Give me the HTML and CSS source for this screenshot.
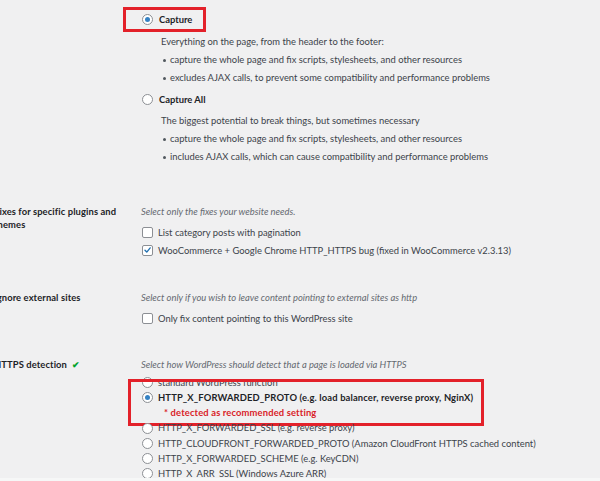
FILE: index.html
```html
<!DOCTYPE html>
<html lang="en">
<head>
<meta charset="utf-8">
<title>Settings</title>
<link rel="stylesheet" href="styles.css">
</head>
<body>
<div class="settings">
  <div class="row row-first">
    <div class="label"></div>
    <div class="field">
      <div class="opt highlighted">
        <span class="radio checked"></span><span class="opt-title">Capture</span>
        <span class="annot annot-1"></span>
      </div>
      <div class="explain">
        <p class="lead">Everything on the page, from the header to the footer:</p>
        <ul class="bullets">
          <li>capture the whole page and fix scripts, stylesheets, and other resources</li>
          <li>excludes AJAX calls, to prevent some compatibility and performance problems</li>
        </ul>
      </div>
      <div class="opt opt-second">
        <span class="radio"></span><span class="opt-title">Capture All</span>
      </div>
      <div class="explain">
        <p class="lead">The biggest potential to break things, but sometimes necessary</p>
        <ul class="bullets">
          <li>capture the whole page and fix scripts, stylesheets, and other resources</li>
          <li>includes AJAX calls, which can cause compatibility and performance problems</li>
        </ul>
      </div>
    </div>
  </div>

  <div class="row row-fixes">
    <div class="label">Fixes for specific plugins and themes</div>
    <div class="field">
      <p class="hint">Select only the fixes your website needs.</p>
      <ul class="checks">
        <li><span class="check"></span>List category posts with pagination</li>
        <li><span class="check checked"><svg viewBox="0 0 10 10" width="10" height="10"><path d="M2.2 5.2 L4.2 7.3 L8 2.6" fill="none" stroke="#2271b1" stroke-width="1.5" stroke-linecap="round" stroke-linejoin="round"/></svg></span>WooCommerce + Google Chrome HTTP_HTTPS bug (fixed in WooCommerce v2.3.13)</li>
      </ul>
    </div>
  </div>

  <div class="row row-ignore">
    <div class="label">Ignore external sites</div>
    <div class="field">
      <p class="hint">Select only if you wish to leave content pointing to external sites as http</p>
      <ul class="checks">
        <li><span class="check"></span>Only fix content pointing to this WordPress site</li>
      </ul>
    </div>
  </div>

  <div class="row row-https">
    <div class="label">HTTPS detection <span class="ok">&#10004;</span></div>
    <div class="field">
      <p class="hint">Select how WordPress should detect that a page is loaded via HTTPS</p>
      <ul class="radios">
        <li><span class="radio"></span>standard WordPress function</li>
        <li class="picked">
          <span class="radio checked"></span><strong>HTTP_X_FORWARDED_PROTO (e.g. load balancer, reverse proxy, NginX)</strong>
          <div class="recommended">* detected as recommended setting</div>
          <span class="annot annot-2"></span>
        </li>
        <li><span class="radio"></span>HTTP_X_FORWARDED_SSL (e.g. reverse proxy)</li>
        <li><span class="radio"></span>HTTP_CLOUDFRONT_FORWARDED_PROTO (Amazon CloudFront HTTPS cached content)</li>
        <li><span class="radio"></span>HTTP_X_FORWARDED_SCHEME (e.g. KeyCDN)</li>
        <li><span class="radio"></span>HTTP_X_ARR_SSL (Windows Azure ARR)</li>
      </ul>
    </div>
  </div>
</div>
<div class="bottom-edge"></div>
</body>
</html>
```

FILE: styles.css
```css
html, body {
  margin: 0;
  padding: 0;
  background: #f0f0f1;
  overflow: hidden;
  height: 100%;
}
body {
  font-family: "Lato", "Open Sans", sans-serif;
  font-size: 9.4px;
  color: #3c434a;
  line-height: 15px;
}
.settings {
  margin-left: -6px;
  width: 620px;
}
.row {
  display: grid;
  grid-template-columns: 124px 1fr;
  column-gap: 23px;
}
.row-first { padding-top: 11.5px; }
.row-fixes { margin-top: 38.5px; }
.row-ignore { margin-top: 30.5px; }
.row-https { margin-top: 29.5px; }

.label {
  font-weight: 700;
  color: #1d2327;
  line-height: 13px;
  padding-top: 1px;
  letter-spacing: 0.1px;
}
.ok { color: #00a32a; font-size: 9px; margin-left: 3px; }

.field { min-width: 0; }

.opt {
  position: relative;
  display: flex;
  align-items: center;
  height: 15px;
  padding-left: 1px;
}
.opt-title {
  font-weight: 700;
  color: #1d2327;
}
.opt-second { margin-top: 4.5px; }

.radio {
  box-sizing: border-box;
  flex: none;
  display: inline-block;
  width: 11px;
  height: 11px;
  border: 1px solid #8c8f94;
  border-radius: 50%;
  background: #fff;
  margin-right: 6px;
  position: relative;
  vertical-align: middle;
}
.radio.checked::after {
  content: "";
  position: absolute;
  left: 2px;
  top: 2px;
  width: 5px;
  height: 5px;
  border-radius: 50%;
  background: #3582c4;
}

.explain { padding-left: 20px; }
.lead { margin: 7px 0 2.5px; }
.bullets {
  list-style: none;
  margin: 0;
  padding: 0 0 0 9px;
}
.bullets li {
  position: relative;
  line-height: 18px;
}
.bullets li::before {
  content: "";
  position: absolute;
  left: -7px;
  top: 8px;
  width: 3px;
  height: 3px;
  border-radius: 50%;
  background: #50575e;
}
.explain + .opt-second + .explain .lead { margin-top: 6px; }
.explain + .opt-second + .explain .bullets li { line-height: 17.5px; }

.hint {
  margin: 0;
  font-style: italic;
  color: #646970;
}

.checks {
  list-style: none;
  margin: 4.5px 0 0;
  padding: 0 0 0 1px;
}
.checks li {
  display: flex;
  align-items: center;
  height: 18px;
}
.check {
  box-sizing: border-box;
  flex: none;
  width: 11px;
  height: 11px;
  border: 1px solid #8c8f94;
  border-radius: 2px;
  background: #fff;
  margin-right: 5px;
  display: flex;
  align-items: center;
  justify-content: center;
}
.check svg { display: block; }

.radios {
  list-style: none;
  margin: 3px 0 0;
  padding: 0 0 0 1px;
}
.radios li {
  position: relative;
  line-height: 15.3px;
  display: flex;
  flex-wrap: wrap;
  align-items: center;
}
.radios li .radio { margin-right: 5px; }
.radios strong { font-weight: 700; color: #1d2327; letter-spacing: 0.14px; }
.recommended {
  flex-basis: 100%;
  padding-left: 22px;
  color: #d92228;
  font-weight: 700;
  letter-spacing: 0.15px;
}

.annot {
  position: absolute;
  box-sizing: border-box;
  border: 3px solid #e3212a;
  pointer-events: none;
}
.annot-1 {
  left: -18px;
  top: -4.5px;
  width: 83px;
  height: 25px;
}
.annot-2 {
  left: -14px;
  top: -11px;
  width: 356px;
  height: 47px;
}
.bottom-edge {
  position: fixed;
  left: 0;
  right: 0;
  bottom: 0;
  height: 3px;
  background: #f6f7f7;
}
```
